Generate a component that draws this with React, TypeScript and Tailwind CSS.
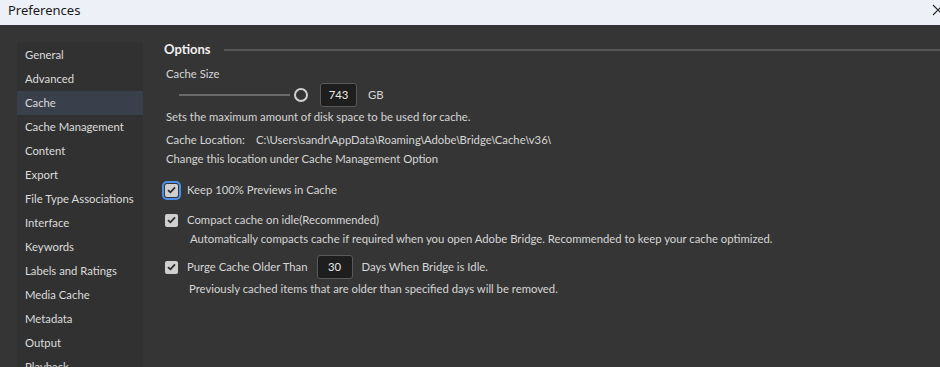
const NAV = [
  'General',
  'Advanced',
  'Cache',
  'Cache Management',
  'Content',
  'Export',
  'File Type Associations',
  'Interface',
  'Keywords',
  'Labels and Ratings',
  'Media Cache',
  'Metadata',
  'Output',
  'Playback',
]

const CACHE_PATH = 'C:\\Users\\sandr\\AppData\\Roaming\\Adobe\\Bridge\\Cache\\v36\\'

function Check({ focused }: { focused?: boolean }) {
  return (
    <span
      className={`ml-[1px] flex h-[13px] w-[13px] shrink-0 items-center justify-center rounded-[2px] bg-[#cfcfcf] ${
        focused ? 'ring-2 ring-[#4b8fe8] ring-offset-[1px] ring-offset-[#353535]' : ''
      }`}
    >
      <svg width="9" height="8" viewBox="0 0 9 8">
        <path d="M1 4.2 L3.4 6.4 L8 1.4" fill="none" stroke="#2a2a2a" strokeWidth="1.7" />
      </svg>
    </span>
  )
}

// backslashes are much wider in Lato than in the original UI font
function PathText({ text }: { text: string }) {
  const parts = text.split('\\')
  return (
    <span className="whitespace-nowrap">
      {parts.map((p, i) => (
        <span key={i}>
          {p}
          {i < parts.length - 1 && <span style={{ fontFamily: '"Liberation Sans", sans-serif' }}>\</span>}
        </span>
      ))}
    </span>
  )
}

export default function App() {
  return (
    <div
      className="flex h-[367px] w-[940px] flex-col overflow-hidden bg-[#353535] text-[11.3px] text-[#d6d6d6]"
      style={{ fontFamily: 'Lato, "Noto Sans", sans-serif' }}
    >
      <div
        className="flex h-[25px] shrink-0 items-start bg-[#eef0f7] pl-[8px] pt-[2px] text-[13px] text-[#1a1a1a]"
        style={{ fontFamily: '"Noto Sans", sans-serif' }}
      >
        <span className="leading-[16px]">Preferences</span>
        <svg className="ml-auto mr-[-5px] mt-[2px]" width="13" height="12" viewBox="0 0 13 12">
          <path d="M1 1 L11 11 M11 1 L1 11" stroke="#222" strokeWidth="1.1" />
        </svg>
      </div>

      <div className="flex flex-1 pt-[17px]">
        <div className="ml-[17px] w-[126px] shrink-0 rounded-t-[3px] bg-[#313131] pt-[1px]">
          {NAV.map((n) => (
            <div
              key={n}
              className={`flex h-[24px] items-center whitespace-nowrap pl-[8px] text-[#dcdcdc] ${
                n === 'Cache' ? 'bg-[#3a404b]' : ''
              }`}
            >
              {n}
            </div>
          ))}
        </div>

        <div className="flex-1 pl-[21px]">
          <div className="flex h-[16px] items-center gap-[13px]">
            <span className="text-[13px] font-bold text-[#f0f0f0]">Options</span>
            <div className="h-[2px] flex-1 bg-[#565656]" />
          </div>

          <div className="pl-[2px]">
            <div className="mt-[8px] h-[16px] leading-[16px]">Cache Size</div>

            <div className="mt-[1px] flex h-[24px] items-center">
              <div className="ml-[13px] h-[2px] w-[111px] bg-[#6a6a6a]" />
              <div className="ml-[4px] h-[14px] w-[14px] rounded-full border-2 border-[#d0d0d0]" />
              <div className="ml-[12px] flex h-[24px] w-[37px] items-center justify-center rounded-[3px] border border-[#5a5a5a] bg-[#1e1e1e] text-[#e8e8e8]">
                743
              </div>
              <span className="ml-[11px]">GB</span>
            </div>

            <div className="h-[20px] leading-[20px]">
              Sets the maximum amount of disk space to be used for cache.
            </div>
            <div className="mt-[3px] flex h-[20px] items-center leading-[20px]">
              <span className="w-[90px] shrink-0">Cache Location:</span>
              <PathText text={CACHE_PATH} />
            </div>
            <div className="h-[18px] leading-[18px]">Change this location under Cache Management Option</div>
          </div>

          <div className="mt-[12px] flex h-[20px] items-center gap-[9px]">
            <Check focused />
            <span>Keep 100% Previews in Cache</span>
          </div>

          <div className="mt-[10px] flex h-[20px] items-center gap-[9px]">
            <Check />
            <span>Compact cache on idle(Recommended)</span>
          </div>
          <div className="h-[18px] pl-[26px] leading-[18px]">
            Automatically compacts cache if required when you open Adobe Bridge. Recommended to keep your cache
            optimized.
          </div>

          <div className="mt-[7px] flex h-[24px] items-center">
            <Check />
            <span className="ml-[9px]">Purge Cache Older Than</span>
            <div className="ml-[9px] flex h-[24px] w-[36px] items-center justify-center rounded-[3px] border border-[#5a5a5a] bg-[#1e1e1e] text-[#e8e8e8]">
              30
            </div>
            <span className="ml-[9px]">Days When Bridge is Idle.</span>
          </div>
          <div className="mt-[1px] h-[18px] pl-[25px] leading-[18px]">
            Previously cached items that are older than specified days will be removed.
          </div>
        </div>
      </div>
    </div>
  )
}
